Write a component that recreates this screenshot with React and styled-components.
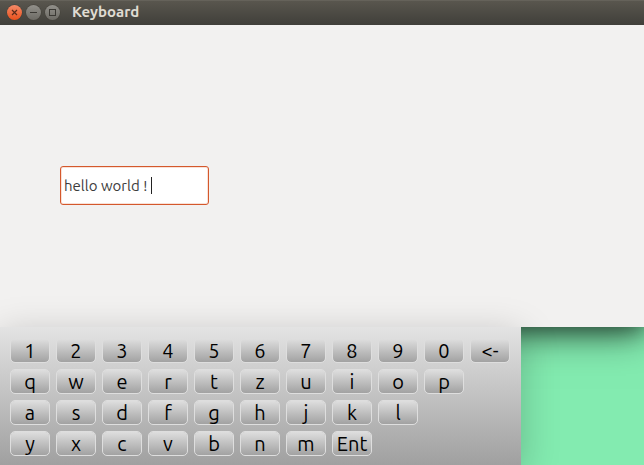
import React, { useRef, useState } from 'react';
import styled, { createGlobalStyle } from 'styled-components';

const ROWS = [
  ['1', '2', '3', '4', '5', '6', '7', '8', '9', '0', '<-'],
  ['q', 'w', 'e', 'r', 't', 'z', 'u', 'i', 'o', 'p'],
  ['a', 's', 'd', 'f', 'g', 'h', 'j', 'k', 'l'],
  ['y', 'x', 'c', 'v', 'b', 'n', 'm', 'Ent']
];

const GlobalStyle = createGlobalStyle`
  * {
    box-sizing: border-box;
  }

  body {
    margin: 0;
    font-family: Ubuntu, "Noto Sans", "Open Sans", sans-serif;
  }

  button,
  input {
    font-family: inherit;
  }
`;

const Desktop = styled.div`
  display: flex;
  flex-direction: column;
  min-height: 100vh;
  overflow: hidden;

  background: #83ebb0;
`;

const Window = styled.main`
  flex: 1;

  display: flex;
  flex-direction: column;

  background: #f2f1f0;
  box-shadow: 0 8px 36px rgba(0, 0, 0, 0.5), 0 4px 20px rgba(0, 0, 0, 0.45);
`;

const TitleBar = styled.header`
  display: flex;
  align-items: center;
  height: 25px;
  padding: 0 6px 2px;

  background: linear-gradient(#59564e, #403f3a);
  border-top: 1px solid #65625a;
`;

const Controls = styled.div`
  display: flex;
  gap: 2px;
  margin-right: 11px;
`;

const Control = styled.button`
  width: 17px;
  height: 17px;
  padding: 0;

  border: 0;
  background: transparent;

  svg {
    display: block;
  }
`;

const Title = styled.h1`
  margin: 0;

  color: #dfdbd2;
  font-size: 15px;
  font-weight: 700;
  line-height: 20px;
`;

const Content = styled.div`
  padding: 141px 60px 20px;
`;

const Field = styled.div`
  position: relative;
  width: 149px;
`;

const TextBox = styled.input`
  display: block;
  width: 100%;
  height: 39px;
  padding: 0 3px;

  color: #3c3c3c;
  font-size: 15px;
  caret-color: transparent;

  background: #fff;
  border: 1px solid #d4582c;
  border-radius: 3px;
  box-shadow: inset 0 0 0 1px #f9e1d7;
  outline: none;
`;

const Caret = styled.span`
  position: absolute;
  left: 91px;
  top: 11px;
  width: 1px;
  height: 17px;

  background: #222;
`;

const Keyboard = styled.section`
  position: relative;
  align-self: flex-start;

  display: flex;
  flex-direction: column;
  gap: 6px;
  padding: 11px 11px 9px 10px;

  background: linear-gradient(#e3e3e3, #a0a0a0);
  box-shadow: 0 8px 36px rgba(0, 0, 0, 0.22);
`;

const KeyRow = styled.div`
  display: flex;
  gap: 6px;
`;

const Key = styled.button`
  display: flex;
  justify-content: center;
  align-items: center;
  width: 40px;
  height: 25px;
  padding: 0;

  color: #000;
  font-size: 20px;
  line-height: 24px;

  background: linear-gradient(#dedede, #a2a2a2) padding-box;
  border: 1px solid #dedede;
  border-radius: 5px;

  &:active {
    background: #a2a2a2;
  }
`;

function CloseIcon() {
  return (
    <svg width="17" height="17" viewBox="0 0 17 17">
      <defs>
        <linearGradient id="close-fill" x1="0" y1="0" x2="0" y2="1">
          <stop offset="0" stopColor="#f58b69" />
          <stop offset="1" stopColor="#e9501c" />
        </linearGradient>
      </defs>
      <circle cx="8.5" cy="8.5" r="8" fill="#45423b" />
      <circle cx="8.5" cy="8.5" r="7.5" fill="url(#close-fill)" />
      <path d="M6 6l5 5M11 6l-5 5" stroke="#5b2b1a" strokeWidth="1.2" />
    </svg>
  );
}

function GreyIcon({ children }) {
  return (
    <svg width="17" height="17" viewBox="0 0 17 17">
      <defs>
        <linearGradient id="grey-fill" x1="0" y1="0" x2="0" y2="1">
          <stop offset="0" stopColor="#92908a" />
          <stop offset="1" stopColor="#6d6b65" />
        </linearGradient>
      </defs>
      <circle cx="8.5" cy="8.5" r="8" fill="#45423b" />
      <circle cx="8.5" cy="8.5" r="7.5" fill="url(#grey-fill)" />
      {children}
    </svg>
  );
}

function WindowControls() {
  return (
    <Controls>
      <Control type="button" aria-label="Close">
        <CloseIcon />
      </Control>
      <Control type="button" aria-label="Minimize">
        <GreyIcon>
          <path d="M5 8.5h7" stroke="#3b3934" />
        </GreyIcon>
      </Control>
      <Control type="button" aria-label="Maximize">
        <GreyIcon>
          <rect x="5.5" y="5.5" width="6" height="6" fill="none" stroke="#3b3934" />
        </GreyIcon>
      </Control>
    </Controls>
  );
}

function App() {
  const [text, setText] = useState('hello world !');
  const input = useRef(null);
  const initial = text === 'hello world !';

  const handleKey = label => {
    if (label === 'Ent') {
      input.current.blur();
    } else if (label === '<-') {
      setText(text.slice(0, -1));
    } else {
      setText(text + label);
    }
  };

  return (
    <Desktop>
      <GlobalStyle />
      <Window>
        <TitleBar>
          <WindowControls />
          <Title>Keyboard</Title>
        </TitleBar>
        <Content>
          <Field>
            <TextBox
              ref={input}
              type="text"
              aria-label="Text"
              value={text}
              onChange={e => setText(e.target.value)}
            />
            {initial && <Caret />}
          </Field>
        </Content>
      </Window>
      <Keyboard aria-label="On-screen keyboard">
        {ROWS.map(row => (
          <KeyRow key={row[0]}>
            {row.map(label => (
              <Key key={label} type="button" onClick={() => handleKey(label)}>
                {label}
              </Key>
            ))}
          </KeyRow>
        ))}
      </Keyboard>
    </Desktop>
  );
}

export default App;
